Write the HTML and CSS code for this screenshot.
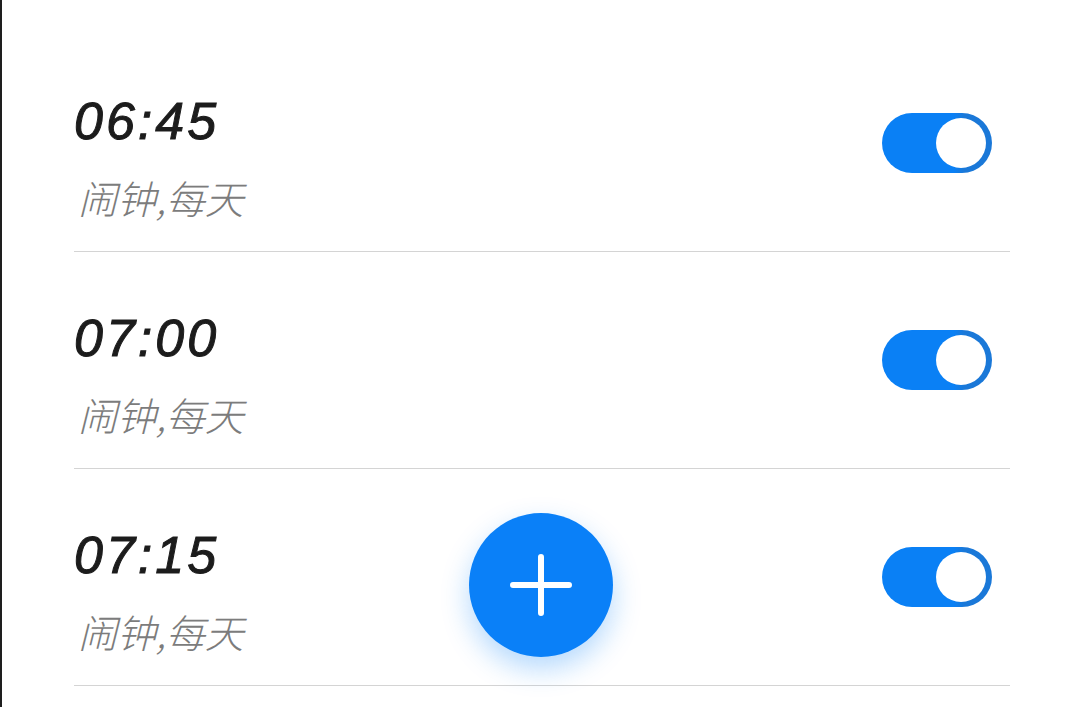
FILE: index.html
```html
<!DOCTYPE html>
<html lang="zh-CN">
<head>
<meta charset="utf-8">
<title>闹钟</title>
<link rel="stylesheet" href="styles.css">
</head>
<body>
<main class="screen">
  <ul class="alarm-list">
    <li class="alarm">
      <div class="alarm-text">
        <div class="alarm-time">06:45</div>
        <div class="alarm-label">闹钟,每天</div>
      </div>
      <div class="toggle"><span class="knob"></span></div>
    </li>
    <li class="alarm">
      <div class="alarm-text">
        <div class="alarm-time">07:00</div>
        <div class="alarm-label">闹钟,每天</div>
      </div>
      <div class="toggle"><span class="knob"></span></div>
    </li>
    <li class="alarm">
      <div class="alarm-text">
        <div class="alarm-time">07:15</div>
        <div class="alarm-label">闹钟,每天</div>
      </div>
      <div class="toggle"><span class="knob"></span></div>
    </li>
  </ul>
  <button class="fab" type="button" aria-label="添加闹钟">
    <svg class="fab-icon" viewBox="0 0 62 62" width="62" height="62">
      <path d="M31 3V59M3 31H59" fill="none" stroke="#fff" stroke-width="6" stroke-linecap="round"/>
    </svg>
  </button>
</main>
</body>
</html>
```
FILE: styles.css
```css
* { box-sizing: border-box; }
html, body { margin: 0; height: 100%; overflow: hidden; background: #fff; }
.screen {
  position: relative;
  width: 1080px;
  height: 707px;
  padding: 35px 70px 0 72px;
  border-left: 2px solid #1e1e1e;
  background: #fff;
}
.alarm-list { list-style: none; margin: 0; padding: 0; }
.alarm {
  display: flex;
  align-items: center;
  justify-content: space-between;
  height: 217px;
  padding-right: 18px;
  border-bottom: 1px solid #d4d4d4;
}
.alarm-text { display: flex; flex-direction: column; gap: 28px; margin-top: 28px; }
.alarm-time {
  font-family: "Liberation Sans", sans-serif;
  font-style: italic;
  font-size: 52px;
  line-height: 52px;
  letter-spacing: 3px;
  color: #1c1c1c;
  -webkit-text-stroke: 1px #1c1c1c;
}
.alarm-label {
  padding-left: 4px;
  font-family: "Noto Sans CJK SC", sans-serif;
  font-weight: 300;
  font-style: italic;
  font-size: 39px;
  line-height: 44px;
  color: #7c7c7c;
}
.toggle {
  display: flex;
  align-items: center;
  justify-content: flex-end;
  width: 110px;
  height: 60px;
  padding-right: 6px;
  border-radius: 30px;
  background: linear-gradient(90deg, #0a80f5 65%, #1a78d8 75%);
}
.knob { width: 50px; height: 50px; border-radius: 50%; background: #fff; }
.fab {
  position: absolute;
  left: 467px;
  top: 513px;
  display: flex;
  align-items: center;
  justify-content: center;
  width: 144px;
  height: 144px;
  padding: 0;
  border: 0;
  border-radius: 50%;
  background: #0a80f8;
  box-shadow: 0 12px 28px rgba(10, 128, 248, 0.3);
}
.fab-icon { display: block; }
```
